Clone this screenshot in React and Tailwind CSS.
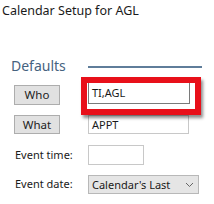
import React from 'react';

const font = { fontFamily: '"Noto Sans", "DejaVu Sans", sans-serif' };

export default function App() {
  return (
    <div className="w-[214px] h-[204px] bg-white relative overflow-hidden text-[11px] text-[#1a1a1a]" style={font}>
      <div className="pl-[2px] pt-[3px] leading-[15px] text-[12.5px]">Calendar Setup for AGL</div>

      <div className="mt-[39px] flex items-center">
        <span className="ml-[11px] w-[77px] text-[14px] leading-[18px] text-[#46627f]">Defaults</span>
        <div className="w-[114px] h-[2px] bg-[#5f7d9a] mt-[2px]" />
      </div>

      {/* Who */}
      <div className="mt-[7px] flex items-start">
        <button className="ml-[14px] mt-[3px] w-[46px] h-[20px] bg-[#e1e1e1] border border-[#adadad] text-[11.5px] leading-[18px] text-[#222]">Who</button>
        <div className="ml-[28px] w-[102px] h-[22px] border border-[#7a7a7a] bg-white pl-[3px] text-[11px] leading-[20px]">TI,AGL</div>
      </div>

      {/* What */}
      <div className="mt-[10px] flex items-start">
        <button className="ml-[14px] w-[46px] h-[19px] bg-[#e1e1e1] border border-[#adadad] text-[11.5px] leading-[17px] text-[#222]">What</button>
        <div className="ml-[28px] w-[101px] h-[19px] border border-[#c8c8c8] bg-white pl-[3px] text-[11px] leading-[17px]">APPT</div>
      </div>

      {/* Event time */}
      <div className="mt-[11px] flex items-center">
        <span className="ml-[15px] w-[73px] text-[11px]">Event time:</span>
        <div className="w-[56px] h-[20px] border border-[#c8c8c8] bg-white" />
      </div>

      {/* Event date */}
      <div className="mt-[10px] flex items-center">
        <span className="ml-[15px] w-[73px] text-[11px]">Event date:</span>
        <div className="w-[111px] h-[19px] border border-[#b8b8b8] bg-[#e5e5e5] flex items-center pl-[3px] pr-[4px] justify-between">
          <span className="text-[11px] leading-[17px]">Calendar's Last</span>
          <svg width="9" height="6" viewBox="0 0 9 6" fill="none">
            <path d="M1 1l3.5 3.5L8 1" stroke="#666" strokeWidth="1" />
          </svg>
        </div>
      </div>

      {/* red highlight annotation */}
      <div className="absolute left-[81px] top-[77px] w-[120px] h-[38px] border-[6px] border-[#e8101a] shadow-[2px_3px_3px_rgba(0,0,0,0.45)]" />
    </div>
  );
}
